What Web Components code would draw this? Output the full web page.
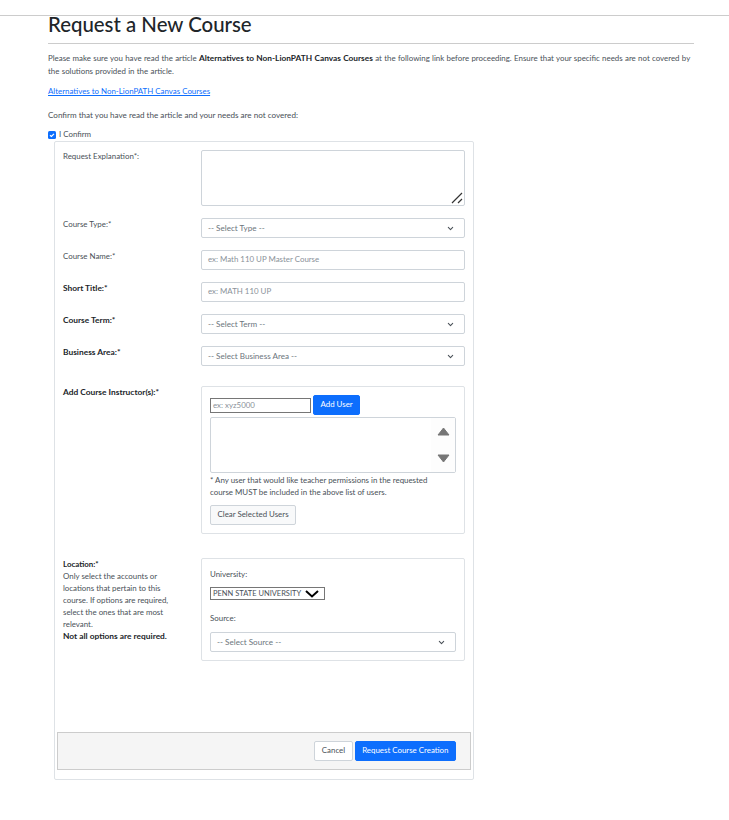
<!DOCTYPE html>
<html>
<head>
<meta charset="utf-8">
<title>Request a New Course</title>
<style>
html, body { margin:0; padding:0; background:#fff; }
body { font:7.9px/1.5 Lato, "Open Sans", sans-serif; color:#495057; }
</style>
</head>
<body>
<course-page></course-page>

<script>
const chevron = `<svg width="7" height="7" viewBox="0 0 16 16"><path fill="none" stroke="#495057" stroke-width="2.4" stroke-linecap="round" stroke-linejoin="round" d="M3 5.5l5 5 5-5"/></svg>`;

customElements.define('form-row', class extends HTMLElement {
    constructor() {
        super();
        this.attachShadow({mode: 'open'}).innerHTML = `
        <style>
        :host { display:grid; grid-template-columns:138px 264px; margin-bottom:12px; }
        .label { line-height:13px; }
        :host([strong]) .label { font-weight:700; font-size:8.4px; color:#212529; }
        </style>
        <div class=label><slot name=label></slot></div>
        <div><slot></slot></div>`;
    }
});

customElements.define('select-box', class extends HTMLElement {
    constructor() {
        super();
        this.attachShadow({mode: 'open'}).innerHTML = `
        <style>
        :host { display:flex; align-items:center; justify-content:space-between; box-sizing:border-box; height:20px; padding:1px 10px 0 6px; border:1px solid #ced4da; border-radius:2px; background:#fff; color:#6c757d; font-size:8.1px; }
        svg { display:block; }
        </style>
        <slot></slot>${chevron}`;
    }
});

customElements.define('text-box', class extends HTMLElement {
    constructor() {
        super();
        this.attachShadow({mode: 'open'}).innerHTML = `
        <style>
        :host { display:flex; align-items:center; box-sizing:border-box; height:20px; padding:1px 6px 0; border:1px solid #ced4da; border-radius:2px; background:#fff; color:#8a9199; }
        </style>
        <slot></slot>`;
    }
});

customElements.define('action-button', class extends HTMLElement {
    constructor() {
        super();
        this.attachShadow({mode: 'open'}).innerHTML = `
        <style>
        :host { display:inline-flex; align-items:center; justify-content:center; box-sizing:border-box; height:20px; padding:0 6.5px; border:1px solid #0d6efd; border-radius:2px; background:#0d6efd; color:#fff; white-space:nowrap; }
        :host([plain]) { background:#f8f9fa; border-color:#ced4da; color:#495057; }
        </style>
        <slot></slot>`;
    }
});

customElements.define('group-box', class extends HTMLElement {
    constructor() {
        super();
        this.attachShadow({mode: 'open'}).innerHTML = `
        <style>
        :host { display:block; box-sizing:border-box; padding:8px 8px 8px; border:1px solid #dee2e6; border-radius:2px; }
        </style>
        <slot></slot>`;
    }
});

customElements.define('user-list', class extends HTMLElement {
    constructor() {
        super();
        this.attachShadow({mode: 'open'}).innerHTML = `
        <style>
        :host { display:flex; justify-content:flex-end; box-sizing:border-box; height:56px; border:1px solid #ced4da; border-radius:2px; background:#fff; }
        .bar { display:flex; flex-direction:column; justify-content:space-between; align-items:center; width:24px; padding:9px 0 9px; box-sizing:border-box; background:#fdfdfd; }
        svg { display:block; }
        </style>
        <div class=bar>
            <svg width="13" height="9" viewBox="0 0 13 9"><path fill="#767676" stroke="#767676" stroke-linejoin="round" d="M6.5 1L12 8H1z"/></svg>
            <svg width="13" height="9" viewBox="0 0 13 9"><path fill="#767676" stroke="#767676" stroke-linejoin="round" d="M1 1H12L6.5 8z"/></svg>
        </div>`;
    }
});

customElements.define('course-page', class extends HTMLElement {
    constructor() {
        super();
        this.attachShadow({mode: 'open'}).innerHTML = `
        <style>
        :host { display:block; height:820px; box-sizing:border-box; padding-top:15px; }
        .rule { height:1px; background:#ccc; }
        main { padding:0 35px 0 48px; }
        h1 { margin:-1px 0 0; font-size:20.4px; line-height:18px; font-weight:500; color:#212529; }
        hr { margin:10px 0 0; border:0; border-top:1px solid #ccc; }
        p { margin:0; line-height:12.5px; }
        .intro { margin:8px -4px 0 0; word-spacing:.3px; }
        .intro b { color:#212529; font-size:8.3px; }
        a { display:block; margin-top:8px; line-height:12px; color:#0d6efd; text-decoration:underline; }
        .confirm-q { margin-top:12px; font-size:8.1px; }
        .check { display:flex; align-items:center; gap:3px; margin-top:7px; height:12px; }
        .check svg { display:block; }
        .card { margin:0 0 0 6px; width:420px; height:639px; box-sizing:border-box; padding:8px 8px 0 8px; border:1px solid #dee2e6; border-radius:2px; display:flex; flex-direction:column; }
        .area { position:relative; height:56px; box-sizing:border-box; border:1px solid #ced4da; border-radius:2px; }
        .area svg { position:absolute; right:1px; bottom:1px; }
        .row-gap { margin-bottom:20px; }
        .row-wide { margin-bottom:24px; }
        .name-input { display:block; box-sizing:border-box; width:101px; height:15px; padding:0 2px; border:1px solid #767676; color:#8a9199; line-height:13px; margin-top:3px; }
        .add { display:flex; align-items:flex-start; gap:2px; margin-bottom:2px; }
        .note { margin:1px 0 7px; line-height:12px; max-width:235px; }
        .uni { margin-bottom:8px; line-height:12px; }
        .uni.first { padding-top:1px; margin-bottom:7px; }
        .native { display:flex; align-items:center; box-sizing:border-box; width:115px; height:13px; padding:1px 2px 0; border:1px solid #767676; color:#495057; white-space:nowrap; gap:4px; margin-bottom:12px; font-size:7.5px; }
        .native svg { display:block; flex:none; }
        .location { margin-bottom:0; }
        .location b { color:#212529; display:block; }
        .location b:last-child { font-size:8.4px; }
        .hint { display:block; line-height:12px; max-width:112px; }
        footer { display:flex; justify-content:flex-end; gap:2px; align-items:center; box-sizing:border-box; height:38px; margin:auto -6px 9px -6px; padding-right:14px; background:#f5f5f5; border:1px solid #ccc; }
        </style>
        <div class=rule></div>
        <main>
            <h1>Request a New Course</h1>
            <hr>
            <p class=intro>Please make sure you have read the article <b>Alternatives to Non-LionPATH Canvas Courses</b> at the following link before proceeding. Ensure that your specific needs are not covered by the solutions provided in the article.</p>
            <a href="#">Alternatives to Non-LionPATH Canvas Courses</a>
            <p class=confirm-q>Confirm that you have read the article and your needs are not covered:</p>
            <div class=check>
                <svg width="8" height="8" viewBox="0 0 8 8"><rect width="8" height="8" rx="1.5" fill="#0d6efd"/><path fill="none" stroke="#fff" stroke-width="1.2" d="M2 4.2l1.4 1.3L6 2.8"/></svg>
                <span>I Confirm</span>
            </div>
            <div class=card>
                <form-row>
                    <span slot=label>Request Explanation*:</span>
                    <div class=area><svg width="12" height="12" viewBox="0 0 12 12"><path stroke="#333" stroke-width="1.2" fill="none" d="M1 11L11 1M7 11l4-4"/></svg></div>
                </form-row>
                <form-row>
                    <span slot=label>Course Type:*</span>
                    <select-box>-- Select Type --</select-box>
                </form-row>
                <form-row>
                    <span slot=label>Course Name:*</span>
                    <text-box>ex: Math 110 UP Master Course</text-box>
                </form-row>
                <form-row strong>
                    <span slot=label>Short Title:*</span>
                    <text-box>ex: MATH 110 UP</text-box>
                </form-row>
                <form-row strong>
                    <span slot=label>Course Term:*</span>
                    <select-box>-- Select Term --</select-box>
                </form-row>
                <form-row strong class=row-gap>
                    <span slot=label>Business Area:*</span>
                    <select-box>-- Select Business Area --</select-box>
                </form-row>
                <form-row strong class=row-wide>
                    <span slot=label>Add Course Instructor(s):*</span>
                    <group-box style="height:148px;font-size:7.9px;font-weight:400;color:#495057">
                        <div class=add>
                            <span class=name-input>ex: xyz5000</span>
                            <action-button>Add User</action-button>
                        </div>
                        <user-list></user-list>
                        <p class=note>* Any user that would like teacher permissions in the requested course MUST be included in the above list of users.</p>
                        <action-button plain>Clear Selected Users</action-button>
                    </group-box>
                </form-row>
                <form-row class=location>
                    <span slot=label class=hint><b>Location:*</b>Only select the accounts or locations that pertain to this course. If options are required, select the ones that are most relevant.<b>Not all options are required.</b></span>
                    <group-box style="height:103px">
                        <div class="uni first">University:</div>
                        <div class=native>PENN STATE UNIVERSITY <svg width="14" height="8" viewBox="0 0 14 8"><path fill="none" stroke="#000" stroke-width="2" d="M1 1l6 5.5L13 1"/></svg></div>
                        <div class=uni>Source:</div>
                        <select-box>-- Select Source --</select-box>
                    </group-box>
                </form-row>
                <footer>
                    <action-button plain style="background:#fff">Cancel</action-button>
                    <action-button>Request Course Creation</action-button>
                </footer>
            </div>
        </main>`;
    }
});
</script>
</body>
</html>
